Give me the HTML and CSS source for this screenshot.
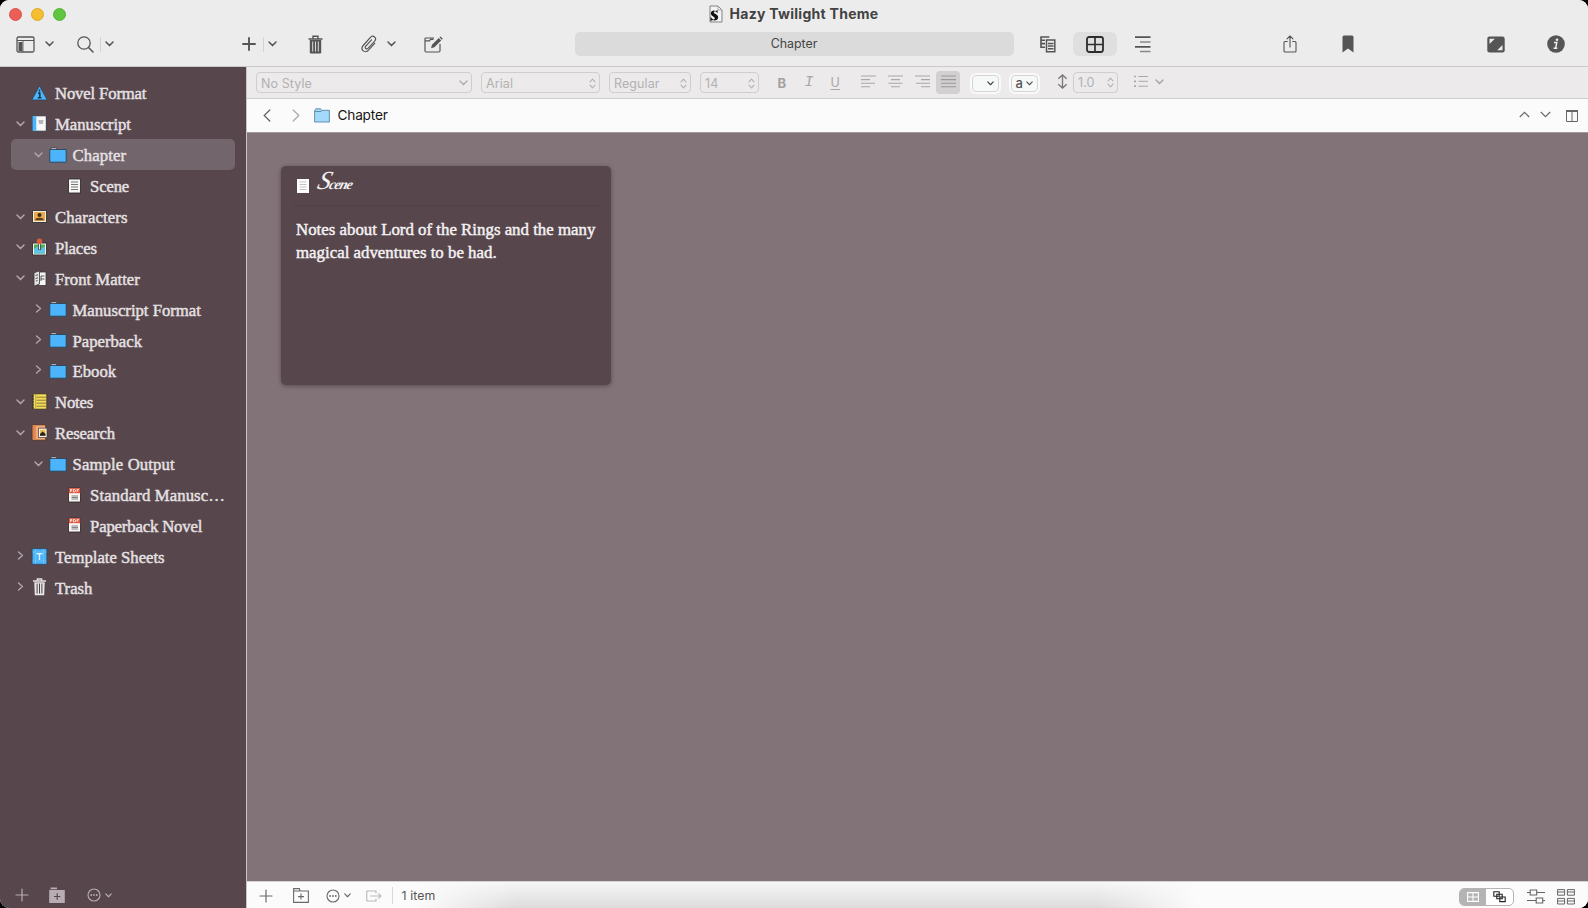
FILE: index.html
```html
<!DOCTYPE html>
<html lang="en">
<head>
<meta charset="utf-8">
<title>Hazy Twilight Theme</title>
<link rel="stylesheet" href="styles.css">
</head>
<body>
<svg class="defs" width="0" height="0">
  <symbol id="down" viewBox="0 0 9 6"><path d="M1 1l3.500 3.600L8 1" fill="none" stroke="currentColor" stroke-width="1.500" stroke-linecap="round" stroke-linejoin="round"/></symbol>
  <symbol id="right" viewBox="0 0 6 9"><path d="M1 1l4 3.500L1 8" fill="none" stroke="currentColor" stroke-width="1.400" stroke-linecap="round" stroke-linejoin="round"/></symbol>
  <symbol id="updown" viewBox="0 0 7 11"><path d="M1 3.800L3.500 1.200 6 3.800M1 7.200l2.500 2.600L6 7.200" fill="none" stroke="currentColor" stroke-width="1.100" stroke-linecap="round" stroke-linejoin="round"/></symbol>
  <symbol id="folder" viewBox="0 0 18 16"><path d="M2 3V1h5.500L8 3" fill="#f4f8fb" stroke="#3b3036" stroke-width=".7"/><path d="M.8 2.500h16.400v12.700H.8z" fill="#4bb4fb" stroke="#2d4358" stroke-width=".9"/></symbol>
  <symbol id="page" viewBox="0 0 14 16"><path d="M1 1h12v14H1z" fill="#f7f7f6" stroke="#352d31" stroke-width=".9"/><path d="M3.500 4h7M3.500 6.500h7M3.500 9h7M3.500 11.500h7" stroke="#777" stroke-width="1"/></symbol>
  <symbol id="pdf" viewBox="0 0 14 16"><path d="M1 1h12v14H1z" fill="#f7f4f2" stroke="#352d31" stroke-width=".9"/><path d="M1.300 1.200h11.400v5H1.300z" fill="#e2553d"/><path d="M3 5V2.500h1.500v1.300H3M6 2.500V5h1.500l.5-.7V3l-.5-.5zM11.300 2.500H9.500V5M9.500 3.800h1.500" stroke="#fff" stroke-width=".7" fill="none"/><path d="M4 9h6.500M4 10.500h6.500M4 12h6.500" stroke="#777" stroke-width=".9"/></symbol>
  <symbol id="plus" viewBox="0 0 14 14"><path d="M7 1v12M1 7h12" stroke="currentColor" stroke-width="1.200" stroke-linecap="round"/></symbol>
  <symbol id="more" viewBox="0 0 14 14"><circle cx="7" cy="7" r="6" fill="none" stroke="currentColor" stroke-width="1.100"/><circle cx="4.200" cy="7" r=".9" fill="currentColor"/><circle cx="7" cy="7" r=".9" fill="currentColor"/><circle cx="9.800" cy="7" r=".9" fill="currentColor"/></symbol>
</svg>
<div class="window">
  <header class="titlebar">
    <div class="title-row">
      <div class="lights"><i class="red"></i><i class="yellow"></i><i class="green"></i></div>
      <div class="title">
        <svg width="14" height="18" viewBox="0 0 14 18"><path d="M1 1h8l4 4v12H1z" fill="#f3f3f3" stroke="#777" stroke-width=".9"/><path d="M9 1v4h4" fill="none" stroke="#999" stroke-width=".8"/><path d="M8.600 5L8.500 8.500C7.500 6.300 5 5.500 4.800 7.200C4.800 9 9.500 9.300 9.200 12.500C9 15.500 5.500 16 3.800 15L1.500 16V11.500C3 14.500 5.500 15.200 5.800 13.500C5.800 11.500 1.800 11.300 1.800 8.300C2 5.500 5 4.800 7 6z" fill="#111"/></svg>
        <span>Hazy Twilight Theme</span>
      </div>
    </div>
    <div class="toolbar">
      <svg width="19" height="17" viewBox="0 0 19 17"><rect x="1" y="1" width="17" height="15" rx="1.500" fill="none" stroke="currentColor" stroke-width="1.300"/><path d="M1 4.500h17" stroke="currentColor"/><path d="M2.500 6h4v9h-4z" fill="currentColor"/><path d="M7 5v11" stroke="currentColor" stroke-width=".8"/></svg>
      <svg width="9" height="6"><use href="#down"/></svg>
      <svg width="17" height="17" viewBox="0 0 17 17"><circle cx="7" cy="7" r="6.200" fill="none" stroke="currentColor" stroke-width="1.300"/><path d="M11.500 11.500l4.500 4.500" stroke="currentColor" stroke-width="1.500" stroke-linecap="round"/></svg>
      <i class="sep"></i>
      <svg width="9" height="6"><use href="#down"/></svg>
      <svg width="14" height="14" viewBox="0 0 14 14"><path d="M7 1v12M1 7h12" stroke="currentColor" stroke-width="1.900" stroke-linecap="round"/></svg>
      <i class="sep"></i>
      <svg width="9" height="6"><use href="#down"/></svg>
      <svg width="15" height="19" viewBox="0 0 15 19"><path d="M.5 4h14M5 3.500V1.300h5v2.200" fill="none" stroke="currentColor" stroke-width="1.400"/><path d="M1.800 5h11.400v12.200q0 1.200-1.200 1.200H3q-1.200 0-1.200-1.200z" fill="currentColor"/><path d="M4.700 6.500v10M7.500 6.500v10M10.300 6.500v10" stroke="#ececec" stroke-width=".9"/></svg>
      <svg width="16" height="18" viewBox="0 0 16 18"><path d="M13.700 8.300L7.500 15.200C5.800 17 3.400 16.900 2 15.600S.7 12.300 2.200 10.500L9.200 2.600C10.500 1.200 12.300.8 13.700 2.100S14.700 5 13.500 6.300L7.200 13.200C6.400 14 5.400 14.100 4.700 13.500S4.100 11.900 4.800 11.100L10.500 4.900" fill="none" stroke="currentColor" stroke-width="1.200" stroke-linecap="round"/></svg>
      <svg width="9" height="6"><use href="#down"/></svg>
      <svg width="19" height="17" viewBox="0 0 19 17"><path d="M10 2H2q-1 0-1 1v11.800q0 1.200 1.200 1.200h12.600q1.200 0 1.200-1.200V8M1 4.800h4.500l1-1.400h3" fill="none" stroke="currentColor" stroke-width="1.200"/><path d="M7 12.200l1-3.500 6.800-6.700 2.400 2.400-6.800 6.800zM15.500 1.300l1-.9 2.300 2.300-1 1z" fill="currentColor"/></svg>
      <div class="search-field">Chapter</div>
      <svg width="16" height="17" viewBox="0 0 16 17"><path d="M.3 1h9M1 .5v11.500M1 4.300h4M1 7.600h4M.3 11.300H5" stroke="currentColor" stroke-width="1.600"/><path d="M6.500 4h8.300v11.800H6.500zM8 7.500h5.500M8 10h5.500M8 12.700h5.500" fill="none" stroke="currentColor" stroke-width="1.500"/></svg>
      <div class="view-active"><svg width="18" height="17" viewBox="0 0 18 17"><rect x="1" y="1" width="16" height="15" rx="2.200" fill="none" stroke="currentColor" stroke-width="1.800"/><path d="M9 1v15M1 8.500h16" stroke="currentColor" stroke-width="1.700"/></svg></div>
      <svg width="16" height="17" viewBox="0 0 16 17"><path d="M0 1.200h15.500M0 10.800h15.500" stroke="currentColor" stroke-width="1.700"/><path d="M5 6h10.500M5 15.500h10.500" stroke="#888" stroke-width="1.700"/></svg>
      <svg width="14" height="18" viewBox="0 0 14 18"><path d="M4.300 6.500H2q-1 0-1 1V16q0 1 1 1h10q1 0 1-1V7.500q0-1-1-1H9.700M7 12V1.200M4 3.800L7 1l3 2.800" fill="none" stroke="currentColor" stroke-width="1.100" stroke-linecap="round" stroke-linejoin="round"/></svg>
      <svg width="12" height="18" viewBox="0 0 12 18"><path d="M.5 17.500V2q0-1.500 1.500-1.500h8q1.500 0 1.500 1.500v15.500L6 13.500z" fill="currentColor"/></svg>
      <svg width="18" height="17" viewBox="0 0 18 17"><rect x=".3" y=".5" width="17.400" height="16" rx="2.200" fill="currentColor"/><path d="M2.500 8V2.800h5.300zM15.500 9v5.200h-5.300z" fill="#ececec"/></svg>
      <svg width="18" height="18" viewBox="0 0 18 18"><circle cx="9" cy="9" r="8.800" fill="currentColor"/><circle cx="10" cy="4.800" r="1.300" fill="#eee"/><path d="M7 7.600h2.800l-1.200 5.600h1.700M6.600 13.200H9" stroke="#eee" stroke-width="1.500" fill="none"/></svg>
    </div>
  </header>
  <div class="body">
    <aside class="sidebar">
      <ul class="binder">
        <li class="l0"><i class="tw"></i><svg class="ic" width="17" height="16" viewBox="0 0 17 16"><path d="M8.500.8L16.200 15H.8z" fill="#4bb4fb" stroke="#2d4358" stroke-width=".8"/><path d="M8.500 4.500v2M7 8h1.800v4.700M6.800 12.800h3.600" stroke="#17324a" stroke-width="1.500" fill="none"/></svg><span class="t-tight">Novel Format</span></li>
        <li class="l0"><svg class="tw" width="9" height="6"><use href="#down"/></svg><svg class="ic" width="17" height="17" viewBox="0 0 17 17"><path d="M1.500.8h13.800v15.400H1.500z" fill="#f8f8f8" stroke="#2d333b" stroke-width=".9"/><path d="M1.500 1.200h3.800v14.600H1.500z" fill="#4bb4fb"/><path d="M7.500 6h5M8 8h4" stroke="#777"/></svg><span>Manuscript</span></li>
        <li class="l1 selected"><svg class="tw" width="9" height="6"><use href="#down"/></svg><svg class="ic fold" width="18" height="16"><use href="#folder"/></svg><span class="t-wide">Chapter</span></li>
        <li class="l2"><i class="tw"></i><svg class="ic" width="14" height="16"><use href="#page"/></svg><span class="t-tight">Scene</span></li>
        <li class="l0"><svg class="tw" width="9" height="6"><use href="#down"/></svg><svg class="ic" width="16" height="15" viewBox="0 0 16 15"><path d="M1 1.500h14v12H1z" fill="#f6efe0" stroke="#332c30" stroke-width=".9"/><path d="M2.500 3h11v9h-11z" fill="#e9aa4a"/><circle cx="8" cy="6" r="2" fill="#3d2c20"/><path d="M4 11.200V9.800q1.500-1 4-1t4 1v1.400z" fill="#5a3f24"/></svg><span class="t-wide">Characters</span></li>
        <li class="l0"><svg class="tw" width="9" height="6"><use href="#down"/></svg><svg class="ic" width="16" height="18" viewBox="0 0 16 18"><path d="M1 5h14v12H1z" fill="#f6f3ea" stroke="#332c30" stroke-width=".9"/><path d="M2.500 6.500h11v9h-11z" fill="#4fae57"/><path d="M2.500 11l4-3 2 3.500 5-3.500v7.500h-11z" fill="#5dc3e8"/><path d="M8 6v6" stroke="#333" stroke-width="2.600"/><path d="M8 6v5.500" stroke="#eee" stroke-width="1.200"/><circle cx="8" cy="3.200" r="2.700" fill="#dd5b3b"/></svg><span class="t-tight">Places</span></li>
        <li class="l0"><svg class="tw" width="9" height="6"><use href="#down"/></svg><svg class="ic" width="15" height="17" viewBox="0 0 15 17"><path d="M6.500 2h7.500v13.500H6.500z" fill="#f5f5f5" stroke="#38323a" stroke-width=".8"/><path d="M2 2.800L7.500.8V14L2 16.200z" fill="#e2e2e2" stroke="#38323a" stroke-width=".8"/><path d="M3.500 5.500L6 4.700M3.500 8.500l2.500-.7M4 11l1.500-.5M9 6h3.500M9 9h3.500M9 6v5" stroke="#555"/></svg><span>Front Matter</span></li>
        <li class="l1"><svg class="tw side" width="6" height="9"><use href="#right"/></svg><svg class="ic fold" width="18" height="16"><use href="#folder"/></svg><span>Manuscript Format</span></li>
        <li class="l1"><svg class="tw side" width="6" height="9"><use href="#right"/></svg><svg class="ic fold" width="18" height="16"><use href="#folder"/></svg><span>Paperback</span></li>
        <li class="l1"><svg class="tw side" width="6" height="9"><use href="#right"/></svg><svg class="ic fold" width="18" height="16"><use href="#folder"/></svg><span>Ebook</span></li>
        <li class="l0"><svg class="tw" width="9" height="6"><use href="#down"/></svg><svg class="ic" width="16" height="17" viewBox="0 0 16 17"><path d="M1.500.8h13.800v15.400H1.500z" fill="#f4dc5c" stroke="#3d3630" stroke-width=".9"/><path d="M5 4.200h10M5 7.200h10M5 10.200h10M5 13.200h10" stroke="#8d7c35"/><path d="M4.200 1v15" stroke="#b19a3c" stroke-width=".8"/><path d="M.4 3h2M.4 6h2M.4 9h2M.4 12h2M.4 15h2" stroke="#332e2e"/></svg><span class="t-tight">Notes</span></li>
        <li class="l0"><svg class="tw" width="9" height="6"><use href="#down"/></svg><svg class="ic" width="17" height="17" viewBox="0 0 17 17"><path d="M1.200.8h13.600v15.400H1.200z" fill="#f0aa78" stroke="#4b3229" stroke-width=".9"/><path d="M1.700 1.200h3v14.600h-3z" fill="#e38350"/><path d="M7.500 4.200H16v9.300H7.500z" fill="#f7f3ec" stroke="#49382f" stroke-width=".7"/><path d="M9 5.800h5.500v6H9z" fill="#efbd4a"/><path d="M9 11.800V10l2.700-2.500 2.800 2.500v1.800z" fill="#222"/></svg><span class="t-tight">Research</span></li>
        <li class="l1"><svg class="tw" width="9" height="6"><use href="#down"/></svg><svg class="ic fold" width="18" height="16"><use href="#folder"/></svg><span class="t-wide">Sample Output</span></li>
        <li class="l2"><i class="tw"></i><svg class="ic" width="14" height="16"><use href="#pdf"/></svg><span class="t-wide">Standard Manusc…</span></li>
        <li class="l2"><i class="tw"></i><svg class="ic" width="14" height="16"><use href="#pdf"/></svg><span class="t-tight">Paperback Novel</span></li>
        <li class="l0"><svg class="tw side" width="6" height="9"><use href="#right"/></svg><svg class="ic" width="16" height="17" viewBox="0 0 16 17"><path d="M.6.6h14.800v15.800H.6z" fill="#49b2f8" stroke="#2d4358" stroke-width=".8"/><path d="M1 4h14M1 13h14M4 1v15M12 1v15" stroke="#7fcaf9" stroke-width=".6"/><path d="M5 5.700h6M8 5.700v6.300" stroke="#d9f1ff" stroke-width="1.400"/></svg><span>Template Sheets</span></li>
        <li class="l0"><svg class="tw side" width="6" height="9"><use href="#right"/></svg><svg class="ic" width="14" height="18" viewBox="0 0 14 18"><path d="M.5 3h13M4.800 2.500V1h4.400v1.500" fill="none" stroke="#e6e2e4" stroke-width="1.300"/><path d="M1.800 4.200h10.400l-.5 13H2.300z" fill="#e9e6e8"/><path d="M4.600 5.500v10M7 5.500v10M9.400 5.500v10" stroke="#4b4146"/></svg><span>Trash</span></li>
      </ul>
      <footer class="side-foot">
        <svg width="14" height="14"><use href="#plus"/></svg>
        <svg width="16" height="17" viewBox="0 0 16 17"><path d="M1.500 2.200V.6h6.500v1.600" fill="currentColor"/><path d="M.2 3h15.600v13H.2z" fill="currentColor"/><path d="M8.200 6.300v6.400M5 9.500h6.400" stroke="#57474d" stroke-width="1.200"/></svg>
        <svg width="14" height="14"><use href="#more"/></svg>
        <svg width="7" height="5"><use href="#down"/></svg>
      </footer>
    </aside>
    <main class="main">
      <div class="format">
        <div class="box b1"><span>No Style</span><svg width="9" height="6"><use href="#down"/></svg></div>
        <div class="box b2"><span>Arial</span><svg width="7" height="11"><use href="#updown"/></svg></div>
        <div class="box b3"><span>Regular</span><svg width="7" height="11"><use href="#updown"/></svg></div>
        <div class="box b4"><span>14</span><svg width="7" height="11"><use href="#updown"/></svg></div>
        <b class="bold">B</b><span class="ital">I</span><span class="under">U</span>
        <svg class="al a1" width="15" height="13" viewBox="0 0 15 13"><path d="M0 1h15M0 4.600h9M0 8.200h14M0 11.800h9" stroke="currentColor" stroke-width="1.100"/></svg>
        <svg class="al a2" width="15" height="13" viewBox="0 0 15 13"><path d="M0 1h15M3 4.600h9M.5 8.200h14M3 11.800h9" stroke="currentColor" stroke-width="1.100"/></svg>
        <svg class="al a3" width="15" height="13" viewBox="0 0 15 13"><path d="M0 1h15M6 4.600h9M1 8.200h14M6 11.800h9" stroke="currentColor" stroke-width="1.100"/></svg>
        <div class="justify"><svg width="15" height="13" viewBox="0 0 15 13"><path d="M0 1h15M0 4.600h15M0 8.200h15M0 11.800h15" stroke="currentColor" stroke-width="1.100"/></svg></div>
        <div class="well w1"><svg width="7" height="5"><use href="#down"/></svg></div>
        <div class="well w2"><span>a</span><svg width="7" height="5"><use href="#down"/></svg></div>
        <svg class="spacing" width="11" height="15" viewBox="0 0 11 15"><path d="M5.500 1.200v12.600M1.300 4.800l4.200-3.900 4.200 3.900M1.300 10.200l4.200 3.900 4.200-3.900" fill="none" stroke="currentColor" stroke-width="1.300"/></svg>
        <div class="box b5"><span>1.0</span><svg width="7" height="11"><use href="#updown"/></svg></div>
        <svg class="list" width="14" height="13" viewBox="0 0 14 13"><path d="M4.500 1.500H14M4.500 6.300H14M4.500 11.200H14" stroke="currentColor"/><path d="M0 1.500h2M0 6.300h2M0 11.200h2" stroke="currentColor" stroke-width="1.700"/></svg>
        <svg class="lchev" width="9" height="6"><use href="#down"/></svg>
      </div>
      <div class="path">
        <svg class="back" width="8" height="13" viewBox="0 0 8 13"><path d="M6.800 1L1.200 6.500l5.600 5.500" fill="none" stroke="#666" stroke-width="1.300" stroke-linecap="round"/></svg>
        <svg class="fwd" width="8" height="13" viewBox="0 0 8 13"><path d="M1.200 1l5.600 5.500L1.200 12" fill="none" stroke="#aaa" stroke-width="1.300" stroke-linecap="round"/></svg>
        <svg class="pf" width="16" height="15" viewBox="0 0 16 15"><path d="M.6 2.800L1.800.8h4.700l1 1.500h7.900V14H.6zM.6 3.500h6.800" fill="#a3d9fb" stroke="#5c87a3" stroke-width=".9"/></svg>
        <span>Chapter</span>
        <div class="path-right">
          <svg width="11" height="7" viewBox="0 0 11 7"><path d="M.8 6l4.700-4.700L10.200 6" fill="none" stroke="#6b6b6b" stroke-width="1.200"/></svg>
          <svg width="11" height="7" viewBox="0 0 11 7"><path d="M.8 1l4.700 4.700L10.200 1" fill="none" stroke="#6b6b6b" stroke-width="1.200"/></svg>
          <svg width="12" height="12" viewBox="0 0 12 12"><path d="M.5.8h11v10.700H.5zM6 1v10.500" fill="none" stroke="#666"/><path d="M0 1h12" stroke="#666" stroke-width="1.800"/></svg>
        </div>
      </div>
      <div class="board">
        <article class="card">
          <header><svg width="12" height="14" viewBox="0 0 12 14"><path d="M0 0h12v14H0z" fill="#fff"/><path d="M2.500 3h7M2.500 5.500h7M2.500 8h7M2.500 10.500h7" stroke="#c5c5c5"/></svg><h2>Scene</h2></header>
          <p>Notes about Lord of the Rings and the many magical adventures to be had.</p>
        </article>
      </div>
      <footer class="main-foot">
        <svg width="14" height="14"><use href="#plus"/></svg>
        <svg width="16" height="15" viewBox="0 0 16 15"><path d="M.6 3V.6h5.700L7 3h8.400v11.400H.6zM.6 3H7M8 5.600v6M5 8.600h6" fill="none" stroke="currentColor" stroke-width="1.100"/></svg>
        <svg width="14" height="14"><use href="#more"/></svg>
        <svg width="7" height="5"><use href="#down"/></svg>
        <svg width="16" height="12" viewBox="0 0 16 12"><path d="M10 3.500V1H.8v10H10V8.500M4 6h11M12.300 3.300L15 6l-2.700 2.700" fill="none" stroke="#b9b9b9" stroke-width="1.100"/></svg>
        <i class="sep"></i>
        <span>1 item</span>
        <div class="foot-right">
          <div class="segmented">
            <div class="on"><svg width="12" height="10" viewBox="0 0 12 10"><path d="M.6.6h10.800v8.800H.6zM6 .6v8.800M.6 5h10.800" fill="none" stroke="#fff" stroke-width="1.100"/></svg></div>
            <div><svg width="13" height="12" viewBox="0 0 13 12"><path d="M.8.8h5.400v4.400H.8zM3.800 3.300h5.400v4.400H3.800zM6.800 6h5.400v4.600H6.800z" fill="#fff" stroke="#222" stroke-width="1.100"/></svg></div>
          </div>
          <svg width="18" height="15" viewBox="0 0 18 15"><path d="M0 3.500h3M10 3.500h8M0 11.500h9M16 11.500h2M3.200 1h6.500v5H3.200zM9.200 9h6.500v5H9.200z" fill="none" stroke="#666" stroke-width="1.100"/></svg>
          <svg width="18" height="16" viewBox="0 0 18 16"><path d="M.6.6h7v5.600h-7zM10.400.6h7v5.600h-7zM.6 9.400h7V15h-7zM10.400 9.400h7V15h-7zM.6 3h7M10.400 3h7M.6 12h7M10.400 12h7" fill="none" stroke="#666"/></svg>
        </div>
      </footer>
    </main>
  </div>
</div>
</body>
</html>
```
FILE: styles.css
```css
* { box-sizing: border-box; }
html, body { margin: 0; height: 100%; background: #000; }
body { font-family: Inter, "Liberation Sans", sans-serif; overflow: hidden; }
svg { display: block; flex: none; }
.defs { position: absolute; }
.window { width: 1588px; height: 908px; display: flex; flex-direction: column; border-radius: 9px; overflow: hidden; background: #ececec; }

/* Title bar and toolbar */
.titlebar { height: 67px; background: #ececec; border-bottom: 1px solid #cbc9ca; color: #555; flex: none; }
.title-row { height: 27px; display: flex; align-items: center; padding-top: 1px; }
.lights { display: flex; gap: 9px; padding-left: 9px; width: 707.500px; }
.lights i { width: 13px; height: 13px; border-radius: 50%; }
.red { background: #ec5f57; border: 1px solid #d9534c; }
.yellow { background: #f5bd30; border: 1px solid #dfa72a; }
.green { background: #61c63f; border: 1px solid #55b137; }
.title { display: flex; align-items: center; gap: 7px; font-size: 14px; font-weight: 700; color: #424242; white-space: nowrap; }
.title svg { margin-left: 1px; }
.title span { letter-spacing: .28px; margin-top: -1px; }
.toolbar { height: 34px; padding-left: 16px; display: grid; align-items: center; justify-items: start;
  grid-template-columns: 29px 32px 23px 5px 136.500px 21.500px 5px 40px 53px 26px 37px 150.500px 465.500px 33px 62px 148px 59px 145px 60px 20px; }
.sep { display: block; width: 1px; height: 15px; background: #d3d3d3; }
.search-field { width: 439px; height: 24px; border-radius: 5px; background: #dbdbdb; text-align: center; font-size: 12.400px; line-height: 24px; color: #444; }
.view-active { width: 44px; height: 24px; border-radius: 6px; background: #dfdfdf; display: grid; place-items: center; color: #2e2e2e; }

.body { flex: 1; display: flex; min-height: 0; }

/* Binder */
.sidebar { width: 247px; background: #57474d; border-right: 1px solid #c9c3c6; display: flex; flex-direction: column; }
.binder { list-style: none; margin: 0; padding: 10.500px 11px 0; font: 16.700px "Liberation Serif", serif; color: #e6e1e3; -webkit-text-stroke: .45px #e6e1e3; flex: 1; }
.binder li { height: 30.900px; display: flex; align-items: center; border-radius: 5px; white-space: nowrap; }
.binder .tw { width: 9px; color: #b0a4aa; flex: none; }
.binder .side { margin-top: -2px; }
.binder .ic { margin-left: 6px; width: 17px; }
.binder .fold { width: 18px; }
.binder span { margin-left: 7px; padding-top: 3px; }
.binder .fold + span { margin-left: 6px; }
.binder .t-tight { letter-spacing: -.15px; }
.binder .t-wide { letter-spacing: .13px; }
.l0 { padding-left: 5px; }
.l1 { padding-left: 22.500px; }
.l2 { padding-left: 40px; }
.selected { background: #72656b; }
.side-foot { height: 26px; display: grid; grid-template-columns: 34px 38px 18px 10px; align-items: center; padding-left: 15px; color: #b7adb2; }

/* Format bar */
.main { flex: 1; display: flex; flex-direction: column; min-width: 0; }
.format { height: 32px; background: #eceaeb; border-bottom: 1px solid #cfcdce; display: flex; align-items: center; padding-left: 9px; color: #a9a7a8; font-size: 12.500px; flex: none; }
.box { height: 21px; border: 1px solid #cfcdce; border-radius: 4px; display: flex; align-items: center; justify-content: space-between; padding: 0 3.500px 0 4px; letter-spacing: .1px; color: #b3b1b2; }
.b1, .b2, .b3, .b4 { padding-top: 1px; }
.b1 { width: 216px; margin-right: 9px; }
.b2 { width: 119px; margin-right: 9px; }
.b3 { width: 82px; margin-right: 9px; }
.b4 { width: 59px; }
.bold { width: 9px; margin-left: 18.500px; font-size: 13px; color: #a3a1a2; }
.ital { width: 10px; margin-left: 18px; font: italic 15px "Liberation Mono", monospace; }
.under { width: 10px; margin-left: 16px; text-decoration: underline; text-underline-offset: 2px; }
.al { margin-top: -3px; }
.a1 { margin-left: 20.500px; }
.a2, .a3 { margin-left: 12px; }
.justify { width: 24px; height: 23px; margin-left: 6px; margin-top: -1px; border-radius: 4px; background: #d2d0d1; display: grid; justify-items: center; padding-top: 4px; color: #999; }
.well { height: 20px; border: 1px solid #d4d4d4; border-radius: 4px; background: #f7f9f8; box-shadow: 0 0 0 2px #fafafa; display: flex; align-items: center; justify-content: flex-end; gap: 3px; padding-right: 4px; color: #444; font-size: 13px; font-weight: 500; margin-top: 1px; }
.well { height: 17px; }
.w1 { width: 27px; margin-left: 12px; }
.w2 { width: 27px; margin-left: 12px; color: #555; }
.spacing { margin-left: 19px; color: #777; margin-top: -2px; }
.b5 { width: 45px; margin-left: 5px; height: 21px; margin-top: -1px; }
.list { margin-left: 16px; margin-top: -3px; }
.lchev { margin-left: 7px; margin-top: -2px; }

/* Path bar */
.path { height: 34px; background: #fbfbfb; border-bottom: 1px solid #a39a9e; display: flex; align-items: center; padding: 0 10px 0 16px; font-size: 13.700px; color: #161616; flex: none; }
.fwd { margin-left: 21px; }
.pf { margin-left: 14px; }
.path span { margin: -1px 0 0 7.500px; letter-spacing: -.22px; }
.path-right { margin-left: auto; display: flex; align-items: center; gap: 10px; }
.path-right svg { margin-top: -3px; }
.path-right svg:last-child { margin: 0 0 0 5px; }

/* Corkboard */
.board { flex: 1; background: #827379; padding: 33px 34px; }
.card { width: 330px; height: 219px; background: #57474d; border-radius: 5px; box-shadow: 0 1px 4px rgba(40, 25, 32, .45); padding: 0 13px 0 15px; color: #f5f2f3; }
.card header { height: 40px; border-bottom: 1px solid #4f4147; display: flex; align-items: center; margin: 0 -2px 0 -3px; padding-left: 4px; }
.card h2 { margin: -5px 0 0 9px; font: italic bold 14px/24px "Liberation Serif", serif; letter-spacing: -1px; transform: skewX(-16deg); }
.card h2::first-letter { font-size: 26px; font-weight: 400; -webkit-text-stroke: .6px #f5f2f3; }
.card p { margin: 11.500px -8px 0 0; font: 16.850px/23.300px "Liberation Serif", serif; -webkit-text-stroke: .45px #f5f2f3; }

/* Footer */
.main-foot { height: 27px; border-top: 1px solid #d8d3d5; display: flex; align-items: center; padding: 1px 13.500px 0 11.500px; color: #6a6a6a; font-size: 12.300px; flex: none;
  background: linear-gradient(90deg, #fbfbfb 170px, #fbfbfb00 270px, #fbfbfb00 850px, #fbfbfb 950px), linear-gradient(#f6f6f6, #dcdcdc); }
.main-foot > svg:nth-child(2) { margin-left: 20px; }
.main-foot > svg:nth-child(3) { margin-left: 17px; }
.main-foot > svg:nth-child(4) { margin-left: 4px; }
.main-foot > svg:nth-child(5) { margin-left: 15px; }
.main-foot .sep { height: 17px; margin-left: 10px; background: #d8d8d8; }
.main-foot span { margin-left: 9px; color: #555; letter-spacing: .1px; }
.foot-right { margin-left: auto; display: flex; align-items: center; gap: 12px; padding-top: 2px; }
.segmented { width: 55px; height: 18px; border: 1px solid #b4b4b4; border-radius: 5px; display: flex; overflow: hidden; background: #fff; margin-right: 1px; }
.segmented div { flex: 1; display: grid; place-items: center; }
.segmented .on { background: #b4b4b4; }
```
